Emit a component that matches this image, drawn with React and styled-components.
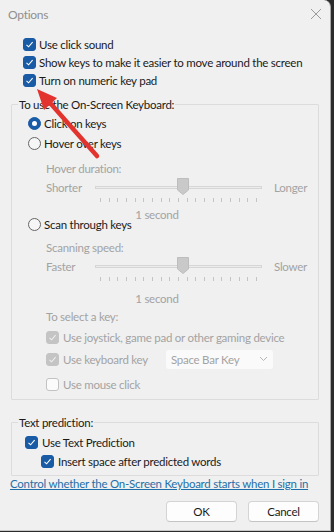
import React from "react";
import styled, { createGlobalStyle } from "styled-components";

const GlobalStyle = createGlobalStyle`
  html, body {
    margin: 0;
    padding: 0;
    background: #2b2b2b;
  }
  body {
    font-family: Lato, "Noto Sans", Arial, sans-serif;
  }
`;

const Window = styled.div`
  position: relative;
  width: 331px;
  height: 531px;
  background: #f0f0f0;
  border-right: 1px solid #a8a8a8;
  border-bottom: 1px solid #c8c8c8;
  border-top-right-radius: 7px;
  display: flex;
  flex-direction: column;
  font-size: 11.5px;
  letter-spacing: -0.25px;
  color: #1a1a1a;
  box-sizing: border-box;
  overflow: hidden;
`;

const TitleBar = styled.div`
  height: 28px;
  display: flex;
  align-items: center;
  justify-content: space-between;
  padding: 0 8px 0 8px;
`;

const Title = styled.span`
  color: #8f8f8f;
  font-size: 12px;
`;

const CloseIcon = () => (
  <svg width="12" height="12" viewBox="0 0 12 12">
    <path d="M1 1 L11 11 M11 1 L1 11" stroke="#9a9a9a" strokeWidth="1" />
  </svg>
);

const TopOptions = styled.div`
  display: flex;
  flex-direction: column;
  padding: 7px 0 0 23px;
`;

const Row = styled.label`
  display: flex;
  align-items: center;
  gap: ${(p) => p.$gap || 3}px;
  height: ${(p) => p.$h || 18}px;
  margin: ${(p) => p.$mt || 0}px 0 ${(p) => p.$mb || 0}px 0;
  padding-left: ${(p) => p.$indent || 0}px;
  color: ${(p) => (p.$disabled ? "#a3a3a3" : "#1a1a1a")};
  white-space: nowrap;
`;

const Box = styled.span`
  width: 13px;
  height: 13px;
  box-sizing: border-box;
  border-radius: 3px;
  flex-shrink: 0;
  display: flex;
  align-items: center;
  justify-content: center;
  background: ${(p) =>
    p.$checked ? (p.$disabled ? "#c4c4c4" : "#1a5ba6") : "#fbfbfb"};
  border: 1px solid
    ${(p) =>
      p.$checked ? (p.$disabled ? "#c4c4c4" : "#1a5ba6") : "#c2c2c2"};
`;

const Tick9 = ({ color }) => (
  <svg width="9" height="9" viewBox="0 0 9 9">
    <path
      d="M1.5 4.8 L3.6 6.8 L7.6 2.2"
      fill="none"
      stroke={color}
      strokeWidth="1.1"
    />
  </svg>
);

const Checkbox = ({ checked, disabled, children, indent, gap, mt }) => (
  <Row $disabled={disabled} $indent={indent} $gap={gap} $mt={mt}>
    <Box $checked={checked} $disabled={disabled}>
      {checked && <Tick9 color={disabled ? "#eeeeee" : "#ffffff"} />}
    </Box>
    <span>{children}</span>
  </Row>
);

const Circle = styled.span`
  width: 13px;
  height: 13px;
  box-sizing: border-box;
  border-radius: 50%;
  flex-shrink: 0;
  display: flex;
  align-items: center;
  justify-content: center;
  background: ${(p) => (p.$checked ? "#1a5ba6" : "#f6f6f6")};
  border: 1px solid ${(p) => (p.$checked ? "#1a5ba6" : "#666666")};
`;

const Dot = styled.span`
  width: 5px;
  height: 5px;
  border-radius: 50%;
  background: #ffffff;
`;

const Radio = ({ checked, children, h, mt }) => (
  <Row $h={h} $mt={mt}>
    <Circle $checked={checked}>{checked && <Dot />}</Circle>
    <span>{children}</span>
  </Row>
);

const Group = styled.fieldset`
  margin: ${(p) => p.$top || 0}px 11px 0 11px;
  padding: 0 0 ${(p) => p.$bottom || 0}px 0;
  border: 1px solid #dcdcdc;
  border-radius: 1px;
  min-width: 0;
`;

const Legend = styled.legend`
  padding: 0 1px;
  margin-left: 6px;
  color: #1a1a1a;
`;

const GroupBody = styled.div`
  display: flex;
  flex-direction: column;
  padding: ${(p) => p.$top || 0}px 0 0 ${(p) => p.$left}px;
`;

const Sub = styled.div`
  display: flex;
  flex-direction: column;
  padding-left: 18px;
`;

const Caption = styled.div`
  color: #a3a3a3;
  height: 18px;
  line-height: 18px;
  text-align: ${(p) => p.$align || "left"};
  padding-right: ${(p) => p.$pr || 0}px;
  margin: ${(p) => p.$mt || 0}px 0 ${(p) => p.$mb || 0}px 0;
`;

const SliderGrid = styled.div`
  display: grid;
  grid-template-columns: 49px 167px auto;
  align-items: center;
  color: #a3a3a3;
`;

const RightLabel = styled.span`
  padding-left: 12px;
`;

const Track = styled.div`
  position: relative;
  height: 18px;
  display: flex;
  align-items: center;
`;

const TrackLine = styled.div`
  width: 100%;
  height: 3px;
  box-sizing: border-box;
  border: 1px solid #d6d6d6;
  background: #ececec;
`;

const Thumb = styled.svg`
  position: absolute;
  left: 82px;
  top: 0;
`;

const Ticks = styled.div`
  grid-column: 2;
  display: flex;
  justify-content: space-between;
  padding: 0 5px;
  height: 5px;
  margin-top: 2px;
`;

const Tick = styled.span`
  width: 1px;
  height: 4px;
  background: #c4c4c4;
`;

const Slider = ({ left, right }) => (
  <SliderGrid>
    <span>{left}</span>
    <Track>
      <TrackLine />
      <Thumb width="12" height="17" viewBox="0 0 12 17">
        <path
          d="M0.5 0.5 H11.5 V12 L6 16.5 L0.5 12 Z"
          fill="#c9c9c9"
          stroke="#bdbdbd"
        />
      </Thumb>
    </Track>
    <RightLabel>{right}</RightLabel>
    <Ticks>
      {Array.from({ length: 19 }).map((_, i) => (
        <Tick key={i} />
      ))}
    </Ticks>
  </SliderGrid>
);

const Select = styled.div`
  width: 107px;
  height: 19px;
  box-sizing: border-box;
  margin-left: 14px;
  background: #fafafa;
  border-radius: 3px;
  display: flex;
  align-items: center;
  justify-content: space-between;
  padding: 0 5px 0 5px;
  color: #a3a3a3;
`;

const Link = styled.a`
  display: block;
  margin: -1px 0 0 10px;
  color: #1f6fa8;
  text-decoration: underline;
  height: 18px;
  line-height: 18px;
  white-space: nowrap;
  cursor: pointer;
`;

const Buttons = styled.div`
  display: flex;
  justify-content: flex-end;
  gap: 11px;
  padding: 8px 11px 0 0;
`;

const Button = styled.button`
  width: 71px;
  height: 21px;
  background: #fdfdfd;
  border: 1px solid #d4d4d4;
  border-bottom-color: #c4c4c4;
  border-radius: 4px;
  font-family: inherit;
  font-size: 11.5px;
  letter-spacing: -0.25px;
  color: #1a1a1a;
  padding: 0;
`;

const Arrow = styled.svg`
  position: absolute;
  left: 0;
  top: 0;
  pointer-events: none;
`;

export default function App() {
  return (
    <>
      <GlobalStyle />
      <Window>
        <TitleBar>
          <Title>Options</Title>
          <CloseIcon />
        </TitleBar>
        <TopOptions>
          <Checkbox checked>Use click sound</Checkbox>
          <Checkbox checked>
            Show keys to make it easier to move around the screen
          </Checkbox>
          <Checkbox checked>Turn on numeric key pad</Checkbox>
        </TopOptions>

        <Group $top={9} $bottom={6}>
          <Legend>To use the On-Screen Keyboard:</Legend>
          <GroupBody $top={2} $left={16}>
            <Radio checked h={20}>
              Click on keys
            </Radio>
            <Radio h={21}>Hover over keys</Radio>
            <Sub>
              <Caption $mt={6}>Hover duration:</Caption>
              <Slider left="Shorter" right="Longer" />
              <Caption $align="center" $pr={50} $mt={3}>
                1 second
              </Caption>
            </Sub>
            <Radio mt={-9} h={18}>
              Scan through keys
            </Radio>
            <Sub>
              <Caption $mt={6}>Scanning speed:</Caption>
              <Slider left="Faster" right="Slower" />
              <Caption $align="center" $pr={50} $mt={8}>
                1 second
              </Caption>
              <Caption $mb={2}>To select a key:</Caption>
              <Checkbox checked disabled gap={4}>
                Use joystick, game pad or other gaming device
              </Checkbox>
              <Row $disabled $gap={4} $h={26} $mt={0} $mb={3}>
                <Box $checked $disabled>
                  <Tick9 color="#eeeeee" />
                </Box>
                <span>Use keyboard key</span>
                <Select>
                  <span>Space Bar Key</span>
                  <svg width="9" height="6" viewBox="0 0 9 6">
                    <path
                      d="M1 1 L4.5 4.5 L8 1"
                      fill="none"
                      stroke="#b5b5b5"
                    />
                  </svg>
                </Select>
              </Row>
              <Checkbox disabled gap={4}>
                Use mouse click
              </Checkbox>
            </Sub>
          </GroupBody>
        </Group>

        <Group $top={16} $bottom={5}>
          <Legend>Text prediction:</Legend>
          <GroupBody $top={4} $left={13}>
            <Checkbox checked gap={4}>
              Use Text Prediction
            </Checkbox>
            <Checkbox checked indent={16} gap={4} mt={1}>
              Insert space after predicted words
            </Checkbox>
          </GroupBody>
        </Group>

        <Link>Control whether the On-Screen Keyboard starts when I sign in</Link>

        <Buttons>
          <Button>OK</Button>
          <Button>Cancel</Button>
        </Buttons>

        <Arrow width="334" height="532" viewBox="0 0 334 532">
          <line
            x1="97"
            y1="156"
            x2="51"
            y2="104"
            stroke="#e2332f"
            strokeWidth="4.5"
            strokeLinecap="round"
          />
          <polygon points="37,89 57,98 44,110" fill="#e2332f" />
        </Arrow>
      </Window>
    </>
  );
}
